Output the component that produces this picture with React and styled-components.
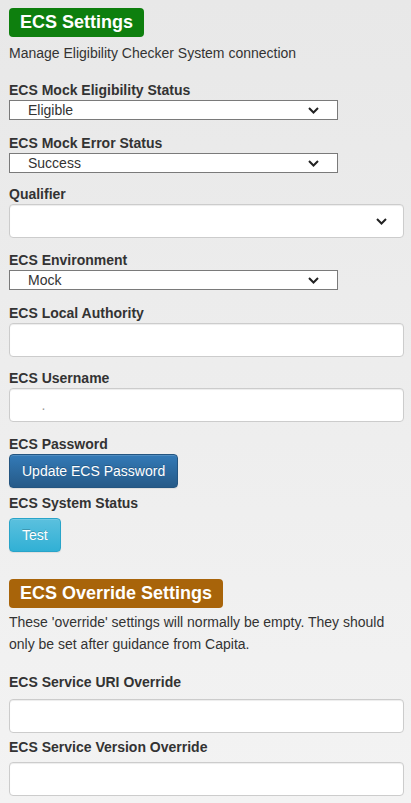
import React from "react";
import styled, { createGlobalStyle } from "styled-components";

const GlobalStyle = createGlobalStyle`
  html, body {
    margin: 0;
    padding: 0;
  }
  body {
    font-family: "Liberation Sans", Arial, sans-serif;
    font-size: 14px;
    line-height: 20px;
    color: #333;
    background: linear-gradient(to bottom, #e8e8e8 0%, #f3f3f3 100%);
    min-height: 100vh;
  }
`;

const Page = styled.div`
  display: flex;
  flex-direction: column;
  align-items: stretch;
  padding: 8px 7px 0 9px;
  min-height: 100vh;
  box-sizing: border-box;
`;

const Badge = styled.h2`
  align-self: flex-start;
  margin: ${(p) => p.$mt || 0}px 0 0;
  padding: 0 11px;
  height: 29px;
  line-height: 29px;
  font-size: 18px;
  font-weight: bold;
  color: #fff;
  border-radius: 4px;
  background: ${(p) => p.$color};
`;

const Intro = styled.p`
  margin: ${(p) => p.$mt || 0}px 0 0;
  color: #333;
  line-height: ${(p) => p.$lh || 20}px;
`;

const Field = styled.div`
  display: flex;
  flex-direction: column;
  align-items: ${(p) => (p.$stretch ? "stretch" : "flex-start")};
  margin-top: ${(p) => p.$mt || 0}px;
  gap: ${(p) => p.$gap || 0}px;
`;

const Label = styled.label`
  font-weight: bold;
  font-size: 14px;
  line-height: 20px;
  color: #333;
`;

const SelectWrap = styled.div`
  position: relative;
  width: ${(p) => (p.$wide ? "100%" : "329px")};
  box-sizing: border-box;
`;

const Select = styled.select`
  appearance: none;
  -webkit-appearance: none;
  display: block;
  width: 100%;
  box-sizing: border-box;
  margin: 0;
  font-family: inherit;
  font-size: 14px;
  color: #333;
  background: #fff;
  ${(p) =>
    p.$wide
      ? `
    height: 34px;
    padding: 6px 12px;
    border: 1px solid #ccc;
    border-radius: 4px;
    box-shadow: inset 0 1px 1px rgba(0, 0, 0, 0.075);
  `
      : `
    height: 20px;
    padding: 0 0 0 18px;
    line-height: 18px;
    border: 1px solid #7a7a7a;
    border-radius: 0;
  `}
`;

const Chevron = styled.svg`
  position: absolute;
  top: 50%;
  right: ${(p) => p.$right}px;
  width: 11px;
  height: 7px;
  margin-top: -3px;
  pointer-events: none;
`;

const Input = styled.input`
  display: block;
  width: 100%;
  height: 34px;
  box-sizing: border-box;
  margin: 0;
  padding: 6px 12px;
  font-family: inherit;
  font-size: 14px;
  color: #999;
  background: #fff;
  border: 1px solid #ccc;
  border-radius: 4px;
  box-shadow: inset 0 1px 1px rgba(0, 0, 0, 0.075);
`;

const Button = styled.button`
  height: 34px;
  padding: 6px 12px;
  font-family: inherit;
  font-size: 14px;
  line-height: 20px;
  color: #fff;
  border-radius: 4px;
  border: 1px solid ${(p) => (p.$variant === "info" ? "#28a4c9" : "#245580")};
  background-image: ${(p) =>
    p.$variant === "info"
      ? "linear-gradient(to bottom, #5bc0de 0%, #31b0d5 100%)"
      : "linear-gradient(to bottom, #337ab7 0%, #265a88 100%)"};
  box-shadow: inset 0 1px 0 rgba(255, 255, 255, 0.15), 0 1px 1px rgba(0, 0, 0, 0.075);
  text-shadow: 0 -1px 0 rgba(0, 0, 0, 0.2);
  cursor: pointer;
`;

function Arrow({ right }) {
  return (
    <Chevron $right={right} viewBox="0 0 11 7">
      <path d="M1 1 L5.5 5.5 L10 1" fill="none" stroke="#222" strokeWidth="2" />
    </Chevron>
  );
}

function SelectField({ label, value, options, wide, mt, gap }) {
  return (
    <Field $mt={mt} $gap={gap}>
      <Label>{label}</Label>
      <SelectWrap $wide={wide}>
        <Select $wide={wide} defaultValue={value}>
          {options.map((o) => (
            <option key={o}>{o}</option>
          ))}
        </Select>
        <Arrow right={wide ? 17 : 19} />
      </SelectWrap>
    </Field>
  );
}

function TextField({ label, value, mt, gap }) {
  return (
    <Field $mt={mt} $gap={gap} $stretch>
      <Label>{label}</Label>
      <Input type="text" defaultValue={value} />
    </Field>
  );
}

export default function App() {
  return (
    <>
      <GlobalStyle />
      <Page>
        <Badge $color="#0e7f0e">ECS Settings</Badge>
        <Intro $mt={6}>Manage Eligibility Checker System connection</Intro>

        <SelectField mt={17} gap={0} label="ECS Mock Eligibility Status" value="Eligible" options={["Eligible", "Not Eligible"]} />
        <SelectField mt={13} gap={0} label="ECS Mock Error Status" value="Success" options={["Success", "Error"]} />
        <SelectField mt={11} gap={0} wide label="Qualifier" value="" options={[""]} />
        <SelectField mt={12} gap={0} label="ECS Environment" value="Mock" options={["Mock", "Live"]} />

        <TextField mt={13} gap={0} label="ECS Local Authority" value="" />
        <TextField mt={11} gap={0} label="ECS Username" value={"\u00a0\u00a0\u00a0\u00a0\u00a0."} />

        <Field $mt={12} $gap={0}>
          <Label>ECS Password</Label>
          <Button>Update ECS Password</Button>
        </Field>

        <Field $mt={5} $gap={5}>
          <Label>ECS System Status</Label>
          <Button $variant="info">Test</Button>
        </Field>

        <Badge $color="#a8640a" $mt={27}>ECS Override Settings</Badge>
        <Intro $mt={3} $lh={22}>
          These 'override' settings will normally be empty. They should only be set after guidance from Capita.
        </Intro>

        <TextField mt={17} gap={7} label="ECS Service URI Override" value="" />
        <TextField mt={4} gap={5} label="ECS Service Version Override" value="" />
      </Page>
    </>
  );
}
